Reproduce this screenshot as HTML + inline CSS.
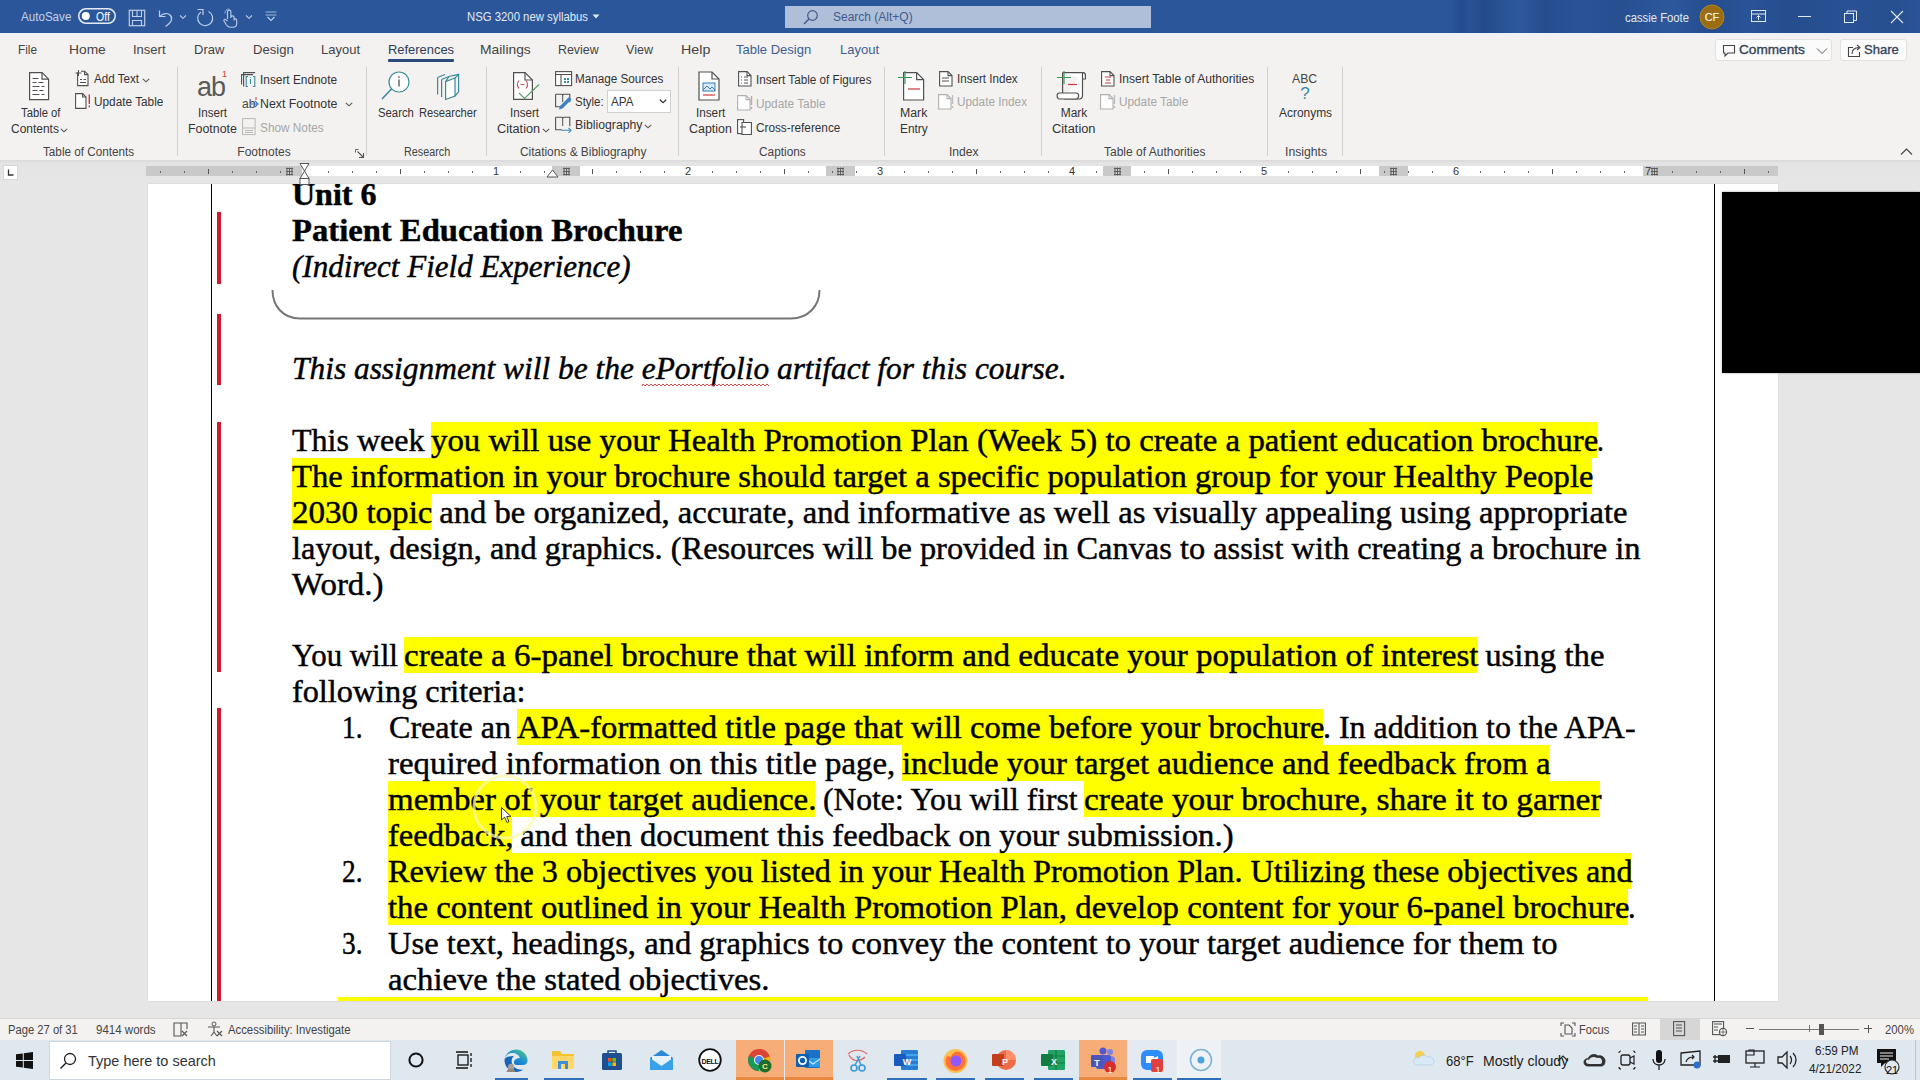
<!DOCTYPE html>
<html><head><meta charset="utf-8">
<style>
*{margin:0;padding:0;box-sizing:border-box}
html,body{width:1920px;height:1080px;overflow:hidden;background:#e6e6e6;font-family:"Liberation Sans",sans-serif;}
.a{position:absolute;white-space:pre}
svg{position:absolute;overflow:visible}
#title{position:absolute;left:0;top:0;width:1920px;height:33px;background:#2b579a;overflow:hidden}
#tabs{position:absolute;left:0;top:33px;width:1920px;height:32px;background:linear-gradient(#eef1f5 0px,#f4f1f0 4px,#f3f2f1 32px)}
#ribbon{position:absolute;left:0;top:65px;width:1920px;height:95px;background:#f3f2f1}
.tt{position:absolute;font-size:13px;color:#444;white-space:pre;line-height:16px}
.rt{position:absolute;font-size:12px;color:#262626;white-space:pre;line-height:14px}
.dis{color:#a6a6a6}
.gl{position:absolute;font-size:12px;color:#444;white-space:pre;line-height:14px}
.sep{position:absolute;top:4px;width:1px;height:87px;background:#d2d0ce}
#ruler{position:absolute;left:0;top:160px;width:1920px;height:24px;background:linear-gradient(#d9d9d9 0px,#e4e4e4 3px,#e6e6e6 24px)}
#page{position:absolute;left:148px;top:184px;width:1630px;height:817px;background:#fff;overflow:hidden;box-shadow:0 0 1px 0 #b8b8b8}
.hl{position:absolute;height:36px;background:#ffff00}
.tx{position:absolute;white-space:pre;-webkit-text-stroke:0.45px #000;font-family:"Liberation Serif",serif;font-size:32px;line-height:36px;color:#000;transform-origin:0 0}
#status{position:absolute;left:0;top:1018px;width:1920px;height:22px;background:#f3f2f1;border-top:1px solid #d6d6d6}
.st{position:absolute;font-size:12px;color:#444;white-space:pre;line-height:14px}
#taskbar{position:absolute;left:0;top:1040px;width:1920px;height:40px;background:#dfe7ef}
</style></head><body>
<div id="title">
<div style="position:absolute;left:1450px;top:0;width:470px;height:33px;background:linear-gradient(90deg,rgba(25,55,115,0) 0px,rgba(25,55,115,0.35) 12px,rgba(25,55,115,0.1) 20px,rgba(25,55,115,0.4) 34px,rgba(25,55,115,0.15) 50px,rgba(60,100,170,0.15) 70px,rgba(25,55,115,0.3) 95px,rgba(25,55,115,0.1) 130px,rgba(25,55,115,0.25) 170px,rgba(60,100,170,0.1) 220px,rgba(25,55,115,0.3) 260px,rgba(25,55,115,0.1) 300px,rgba(25,55,115,0.3) 340px,rgba(25,55,115,0.15) 400px,rgba(25,55,115,0.25) 440px,rgba(25,55,115,0.1) 470px)"></div>
</div>
<div class="a" style="left:21.0px;top:8.50px;font-size:13px;line-height:16px;color:#c3d0e8;font-family:'Liberation Sans',sans-serif;;transform:scaleX(0.8929);transform-origin:0 0">AutoSave</div>
<svg style="left:78px;top:8px;" width="38" height="16" viewBox="0 0 38 16"><rect x="0.75" y="0.75" width="36.5" height="14.5" rx="7.25" fill="none" stroke="#e6ecf5" stroke-width="1.5"/><circle cx="7.8" cy="8" r="4" fill="#fff"/></svg>
<div class="a" style="left:96.0px;top:9.84px;font-size:12px;line-height:14px;color:#fff;font-family:'Liberation Sans',sans-serif;;transform:scaleX(0.8750);transform-origin:0 0">Off</div>
<svg style="left:128px;top:9px;" width="18" height="18" viewBox="0 0 18 18"><rect x="1.3" y="1.3" width="15.4" height="15.4" fill="none" stroke="#bfcee8" stroke-width="1.2"/><path d="M4.5 1.3v6.2h9V1.3M4.5 16.7v-5.2h9v5.2M9 1.3v6" fill="none" stroke="#bfcee8" stroke-width="1.1"/></svg>
<svg style="left:157px;top:8px;" width="20" height="20" viewBox="0 0 20 20"><path d="M2.5 2.5v6h6" fill="none" stroke="#bfcee8" stroke-width="1.2"/><path d="M3 8.5C5.5 5 11 4.5 13.5 7.5 16 10.5 14.5 15 8.5 18.5" fill="none" stroke="#bfcee8" stroke-width="1.2"/></svg>
<svg style="left:179px;top:14px;" width="8" height="6" viewBox="0 0 8 6"><path d="M1 1.5l3 2.8 3-2.8" fill="none" stroke="#bfcee8" stroke-width="1.1"/></svg>
<svg style="left:195px;top:8px;" width="20" height="20" viewBox="0 0 20 20"><path d="M13.5 3.5A7.5 7.5 0 1 1 6 4" fill="none" stroke="#bfcee8" stroke-width="1.2"/><path d="M2.5 1.5h5.5v5.5" fill="none" stroke="#bfcee8" stroke-width="1.2"/></svg>
<svg style="left:222px;top:8px;" width="16" height="20" viewBox="0 0 16 20"><path d="M5.5 11V3.8a1.7 1.7 0 0 1 3.4 0V10M8.9 9.5a1.6 1.6 0 0 1 3.2 0v3M12.1 11.5a1.4 1.4 0 0 1 2.6 0.6v3.4c0 2.2-1.8 3.8-4 3.8H8.5c-1.8 0-3-0.8-4-2.3L2 13c-0.6-1 0.4-2.2 1.5-1.6L5.5 13" fill="none" stroke="#bfcee8" stroke-width="1.1"/><path d="M3 5.5c0-3 1.6-4.5 4.2-4.5" fill="none" stroke="#bfcee8" stroke-width="1" opacity="0.7"/></svg>
<svg style="left:245px;top:14px;" width="8" height="6" viewBox="0 0 8 6"><path d="M1 1.5l3 2.8 3-2.8" fill="none" stroke="#bfcee8" stroke-width="1.1"/></svg>
<svg style="left:264px;top:9px;" width="14" height="14" viewBox="0 0 14 14"><path d="M1.5 3h11M1.5 6h11" stroke="#bfcee8" stroke-width="1" opacity="0.8"/><path d="M3.5 8l3.5 3.5 3.5-3.5" fill="none" stroke="#bfcee8" stroke-width="1.2"/></svg>
<div class="a" style="left:467.0px;top:9.84px;font-size:12px;line-height:14px;color:#e2e9f4;font-family:'Liberation Sans',sans-serif;;transform:scaleX(0.9449);transform-origin:0 0">NSG 3200 new syllabus</div>
<svg style="left:592px;top:14px;" width="8" height="6" viewBox="0 0 8 6"><path d="M0.5 0.5h7l-3.5 4z" fill="#e2e9f4"/></svg>
<div style="position:absolute;left:785px;top:6px;width:366px;height:22px;background:#afbfda;"></div>
<svg style="left:802px;top:9px;" width="18" height="16" viewBox="0 0 18 16"><circle cx="10.5" cy="6.5" r="4.8" fill="none" stroke="#40598a" stroke-width="1.2"/><path d="M7 10 L2 15" stroke="#40598a" stroke-width="1.4"/></svg>
<div class="a" style="left:833.0px;top:9.84px;font-size:12px;line-height:14px;color:#3f5a8c;font-family:'Liberation Sans',sans-serif;;transform:scaleX(1.0000);transform-origin:0 0">Search (Alt+Q)</div>
<div class="a" style="left:1625.0px;top:10.84px;font-size:12px;line-height:14px;color:#e2e9f4;font-family:'Liberation Sans',sans-serif;;transform:scaleX(0.9412);transform-origin:0 0">cassie Foote</div>
<svg style="left:1699px;top:5px;" width="26" height="26" viewBox="0 0 26 26"><circle cx="13" cy="12" r="12" fill="#9b6d12"/><circle cx="13" cy="12" r="12" fill="none" stroke="#b58420" stroke-width="1"/></svg>
<div class="a" style="left:1212.0px;width:1000px;text-align:center;top:11.19px;font-size:11px;line-height:13px;color:#fff;font-family:'Liberation Sans',sans-serif;">CF</div>
<svg style="left:1751px;top:10px;" width="16" height="14" viewBox="0 0 16 14"><rect x="0.5" y="0.5" width="14" height="11" fill="none" stroke="#e2e9f4" stroke-width="1"/><path d="M0.5 4h14M7.5 10V5.5M5.5 7.5l2-2 2 2" fill="none" stroke="#e2e9f4" stroke-width="1"/></svg>
<div style="position:absolute;left:1798px;top:16px;width:13px;height:1px;background:#e2e9f4;"></div>
<svg style="left:1844px;top:10px;" width="14" height="14" viewBox="0 0 14 14"><rect x="0.5" y="3.5" width="9" height="9" fill="none" stroke="#e2e9f4"/><path d="M3 3.5V1h9.5v9.5H10" fill="none" stroke="#e2e9f4"/></svg>
<svg style="left:1890px;top:10px;" width="14" height="14" viewBox="0 0 14 14"><path d="M1 1L13 13M13 1L1 13" stroke="#e2e9f4" stroke-width="1.1"/></svg>
<div id="tabs"></div>
<div class="a" style="left:17.5px;top:42.30px;font-size:13px;line-height:16px;color:#444;font-family:'Liberation Sans',sans-serif;;transform:scaleX(0.9050);transform-origin:0 0">File</div>
<div class="a" style="left:69.0px;top:42.30px;font-size:13px;line-height:16px;color:#444;font-family:'Liberation Sans',sans-serif;;transform:scaleX(1.0606);transform-origin:0 0">Home</div>
<div class="a" style="left:133.0px;top:42.30px;font-size:13px;line-height:16px;color:#444;font-family:'Liberation Sans',sans-serif;;transform:scaleX(1.0000);transform-origin:0 0">Insert</div>
<div class="a" style="left:194.0px;top:42.30px;font-size:13px;line-height:16px;color:#444;font-family:'Liberation Sans',sans-serif;;transform:scaleX(1.0000);transform-origin:0 0">Draw</div>
<div class="a" style="left:252.5px;top:42.30px;font-size:13px;line-height:16px;color:#444;font-family:'Liberation Sans',sans-serif;;transform:scaleX(1.0051);transform-origin:0 0">Design</div>
<div class="a" style="left:321.0px;top:42.30px;font-size:13px;line-height:16px;color:#444;font-family:'Liberation Sans',sans-serif;;transform:scaleX(1.0000);transform-origin:0 0">Layout</div>
<div class="a" style="left:388.4px;top:42.30px;font-size:13px;line-height:16px;color:#2d3e57;font-family:'Liberation Sans',sans-serif;;transform:scaleX(0.9938);transform-origin:0 0">References</div>
<div class="a" style="left:480.0px;top:42.30px;font-size:13px;line-height:16px;color:#444;font-family:'Liberation Sans',sans-serif;;transform:scaleX(1.0652);transform-origin:0 0">Mailings</div>
<div class="a" style="left:558.0px;top:42.30px;font-size:13px;line-height:16px;color:#444;font-family:'Liberation Sans',sans-serif;;transform:scaleX(0.9524);transform-origin:0 0">Review</div>
<div class="a" style="left:626.0px;top:42.30px;font-size:13px;line-height:16px;color:#444;font-family:'Liberation Sans',sans-serif;;transform:scaleX(0.9643);transform-origin:0 0">View</div>
<div class="a" style="left:680.6px;top:42.30px;font-size:13px;line-height:16px;color:#444;font-family:'Liberation Sans',sans-serif;;transform:scaleX(1.0960);transform-origin:0 0">Help</div>
<div class="a" style="left:736.0px;top:42.30px;font-size:13px;line-height:16px;color:#3d5f92;font-family:'Liberation Sans',sans-serif;;transform:scaleX(1.0000);transform-origin:0 0">Table Design</div>
<div class="a" style="left:840.0px;top:42.30px;font-size:13px;line-height:16px;color:#3d5f92;font-family:'Liberation Sans',sans-serif;;transform:scaleX(1.0000);transform-origin:0 0">Layout</div>
<div style="position:absolute;left:388px;top:59px;width:66px;height:3px;background:#2b4a7a;border-radius:1px"></div>
<div style="position:absolute;left:1715px;top:39px;width:117px;height:22px;background:#fbfbfb;border:1px solid #e3e1df;border-radius:3px"></div>
<svg style="left:1722px;top:44px;" width="15" height="14" viewBox="0 0 15 14"><path d="M1.5 1.5h11v7.5h-6.5l-3 3v-3h-1.5z" fill="none" stroke="#444" stroke-width="1.1"/></svg>
<div class="a" style="left:1739.0px;top:41.50px;font-size:13px;line-height:16px;color:#34455a;font-family:'Liberation Sans',sans-serif;-webkit-text-stroke:0.35px #34455a;transform:scaleX(1.0476);transform-origin:0 0">Comments</div>
<svg style="left:1816px;top:47px;" width="12" height="8" viewBox="0 0 12 8"><path d="M1 1.5l5 5 5-5" fill="none" stroke="#555" stroke-width="1"/></svg>
<div style="position:absolute;left:1840px;top:39px;width:67px;height:22px;background:#fbfbfb;border:1px solid #e3e1df;border-radius:3px"></div>
<svg style="left:1847px;top:43px;" width="15" height="15" viewBox="0 0 15 15"><path d="M6 4.5H1.5v9h11V9" fill="none" stroke="#444" stroke-width="1.1"/><path d="M5 11c0-4 2.5-6.5 7-6.5M10 2l3 2.5-3 2.5" fill="none" stroke="#444" stroke-width="1.1"/></svg>
<div class="a" style="left:1864.0px;top:41.50px;font-size:13px;line-height:16px;color:#34455a;font-family:'Liberation Sans',sans-serif;-webkit-text-stroke:0.35px #34455a;transform:scaleX(1.0000);transform-origin:0 0">Share</div>
<div id="ribbon"></div>
<div style="position:absolute;left:177px;top:67px;width:1px;height:89px;background:#d2d0ce;"></div>
<div style="position:absolute;left:366px;top:67px;width:1px;height:89px;background:#d2d0ce;"></div>
<div style="position:absolute;left:486px;top:67px;width:1px;height:89px;background:#d2d0ce;"></div>
<div style="position:absolute;left:678px;top:67px;width:1px;height:89px;background:#d2d0ce;"></div>
<div style="position:absolute;left:884px;top:67px;width:1px;height:89px;background:#d2d0ce;"></div>
<div style="position:absolute;left:1041px;top:67px;width:1px;height:89px;background:#d2d0ce;"></div>
<div style="position:absolute;left:1267px;top:67px;width:1px;height:89px;background:#d2d0ce;"></div>
<div style="position:absolute;left:1342px;top:67px;width:1px;height:89px;background:#d2d0ce;"></div>
<div class="a" style="left:43.0px;top:144.84px;font-size:12px;line-height:14px;color:#444;font-family:'Liberation Sans',sans-serif;;transform:scaleX(0.9763);transform-origin:0 0">Table of Contents</div>
<div class="a" style="left:237.3px;top:144.84px;font-size:12px;line-height:14px;color:#444;font-family:'Liberation Sans',sans-serif;;transform:scaleX(1.0000);transform-origin:0 0">Footnotes</div>
<div class="a" style="left:404.3px;top:144.84px;font-size:12px;line-height:14px;color:#444;font-family:'Liberation Sans',sans-serif;;transform:scaleX(0.9000);transform-origin:0 0">Research</div>
<div class="a" style="left:520.0px;top:144.84px;font-size:12px;line-height:14px;color:#444;font-family:'Liberation Sans',sans-serif;;transform:scaleX(0.9921);transform-origin:0 0">Citations &amp; Bibliography</div>
<div class="a" style="left:759.3px;top:144.84px;font-size:12px;line-height:14px;color:#444;font-family:'Liberation Sans',sans-serif;;transform:scaleX(0.9870);transform-origin:0 0">Captions</div>
<div class="a" style="left:949.0px;top:144.84px;font-size:12px;line-height:14px;color:#444;font-family:'Liberation Sans',sans-serif;;transform:scaleX(1.0107);transform-origin:0 0">Index</div>
<div class="a" style="left:1104.0px;top:144.84px;font-size:12px;line-height:14px;color:#444;font-family:'Liberation Sans',sans-serif;;transform:scaleX(1.0000);transform-origin:0 0">Table of Authorities</div>
<div class="a" style="left:1285.0px;top:144.84px;font-size:12px;line-height:14px;color:#444;font-family:'Liberation Sans',sans-serif;;transform:scaleX(1.0175);transform-origin:0 0">Insights</div>
<svg style="left:355px;top:149px;" width="10" height="10" viewBox="0 0 10 10"><path d="M0.5 0.5h3M0.5 0.5v3" fill="none" stroke="#666" stroke-width="1"/><path d="M2.5 2.5l5.5 5.5M8.5 4v4.5H4" fill="none" stroke="#555" stroke-width="1.1"/></svg>
<svg style="left:28px;top:71px;" width="23" height="30" viewBox="0 0 23 30"><path d="M1.6 1.6h12.4l6.6 6.6v20.4H1.6z" fill="#fff" stroke="#505050" stroke-width="1.2"/><path d="M14 1.6v6.6h6.6" fill="none" stroke="#505050" stroke-width="1.2"/><path d="M4.5 7.5h6M12.5 7.5h0" stroke="#505050" stroke-width="1.1"/><path d="M4.5 11.5h4M10.5 11.5h5" stroke="#505050" stroke-width="1.1"/><path d="M4.5 15.5h7M13.5 15.5h3" stroke="#505050" stroke-width="1.1"/><path d="M4.5 19.5h5M11.5 19.5h4" stroke="#505050" stroke-width="1.1"/><path d="M4.5 23.5h7M13.5 23.5h3" stroke="#505050" stroke-width="1.1"/></svg>
<div class="a" style="left:20.6px;top:105.84px;font-size:12px;line-height:14px;color:#333;font-family:'Liberation Sans',sans-serif;;transform:scaleX(0.9381);transform-origin:0 0">Table of</div>
<div class="a" style="left:10.6px;top:121.84px;font-size:12px;line-height:14px;color:#333;font-family:'Liberation Sans',sans-serif;;transform:scaleX(0.9979);transform-origin:0 0">Contents</div>
<svg style="left:60px;top:128px;" width="8" height="5" viewBox="0 0 8 5"><path d="M0.8 0.8l3.2 3 3.2-3" fill="none" stroke="#555" stroke-width="1.1"/></svg>
<svg style="left:75px;top:69px;" width="15" height="18" viewBox="0 0 15 18"><path d="M2.6 3.6v13h10.4V5.6l-3.4-3.4H6" fill="#fff" stroke="#505050" stroke-width="1.1"/><path d="M9.6 2.2v3.4H13" fill="none" stroke="#505050" stroke-width="1.1"/><path d="M0.5 4h6M3.5 1v6" stroke="#505050" stroke-width="1"/><path d="M5 10.5h2M8.5 10.5h2.5M5 13.5h6" stroke="#505050" stroke-width="1"/></svg>
<div class="a" style="left:94.4px;top:71.84px;font-size:12px;line-height:14px;color:#333;font-family:'Liberation Sans',sans-serif;;transform:scaleX(0.9702);transform-origin:0 0">Add Text</div>
<svg style="left:142px;top:78px;" width="8" height="5" viewBox="0 0 8 5"><path d="M0.8 0.8l3.2 3 3.2-3" fill="none" stroke="#555" stroke-width="1.1"/></svg>
<svg style="left:74px;top:93px;" width="17" height="17" viewBox="0 0 17 17"><path d="M1.6 0.6h7l3.4 3.4v11.4H1.6z" fill="#fff" stroke="#505050" stroke-width="1.1"/><path d="M8.6 0.6v3.4H12" fill="none" stroke="#505050" stroke-width="1.1"/><path d="M15.3 1.5v9.5M15.3 12.5v1.8" stroke="#c8283a" stroke-width="1.3"/></svg>
<div class="a" style="left:94.4px;top:94.84px;font-size:12px;line-height:14px;color:#333;font-family:'Liberation Sans',sans-serif;;transform:scaleX(0.9841);transform-origin:0 0">Update Table</div>
<div class="a" style="left:197.0px;top:70.64px;font-size:27px;line-height:32px;color:#5a5a5a;font-family:'Liberation Sans',sans-serif;letter-spacing:-1px">ab</div>
<div class="a" style="left:222.0px;top:69.38px;font-size:9px;line-height:11px;color:#d13438;font-family:'Liberation Sans',sans-serif;">1</div>
<div class="a" style="left:197.5px;top:105.84px;font-size:12px;line-height:14px;color:#333;font-family:'Liberation Sans',sans-serif;;transform:scaleX(0.9690);transform-origin:0 0">Insert</div>
<div class="a" style="left:187.5px;top:121.84px;font-size:12px;line-height:14px;color:#333;font-family:'Liberation Sans',sans-serif;;transform:scaleX(1.0326);transform-origin:0 0">Footnote</div>
<svg style="left:241px;top:71px;" width="17" height="17" viewBox="0 0 17 17"><path d="M0.6 13.5V3.6h11.5M2.6 15.4V1.6h11.5" fill="none" stroke="#505050" stroke-width="1.1"/><path d="M7 5.5H5.2v10H7M12 5.5h1.8v10H12M9.5 8v5M9.5 6.3v0.8" fill="none" stroke="#3b8a9a" stroke-width="1.1"/></svg>
<div class="a" style="left:260.0px;top:72.84px;font-size:12px;line-height:14px;color:#333;font-family:'Liberation Sans',sans-serif;;transform:scaleX(0.9870);transform-origin:0 0">Insert Endnote</div>
<div class="a" style="left:242.0px;top:96.84px;font-size:12px;line-height:14px;color:#444;font-family:'Liberation Sans',sans-serif;">ab</div>
<svg style="left:250px;top:96px;" width="10" height="14" viewBox="0 0 10 14"><path d="M1 8h6M5 5l3 3-3 3" fill="none" stroke="#2f7dc2" stroke-width="1.1"/><path d="M6 1v3" stroke="#d13438" stroke-width="1"/></svg>
<div class="a" style="left:260.0px;top:96.84px;font-size:12px;line-height:14px;color:#333;font-family:'Liberation Sans',sans-serif;;transform:scaleX(1.0270);transform-origin:0 0">Next Footnote</div>
<svg style="left:345px;top:102px;" width="8" height="5" viewBox="0 0 8 5"><path d="M0.8 0.8l3.2 3 3.2-3" fill="none" stroke="#555" stroke-width="1.1"/></svg>
<svg style="left:242px;top:118px;" width="14" height="18" viewBox="0 0 14 18"><rect x="0.6" y="0.6" width="12.5" height="16" fill="none" stroke="#b8b8b8" stroke-width="1"/><path d="M0.6 10h12.5M3 12.5h8M3 14.5h8" stroke="#b8b8b8" stroke-width="1"/></svg>
<div class="a" style="left:260.0px;top:120.84px;font-size:12px;line-height:14px;color:#a6a6a6;font-family:'Liberation Sans',sans-serif;;transform:scaleX(0.9841);transform-origin:0 0">Show Notes</div>
<svg style="left:380px;top:71px;" width="32" height="32" viewBox="0 0 32 32"><circle cx="19" cy="11" r="10" fill="#fff" stroke="#3b8a9a" stroke-width="1.2"/><path d="M19 8.5v7" stroke="#333" stroke-width="1.1"/><circle cx="19" cy="6" r="0.8" fill="#333"/><path d="M11.5 18 L2 28" stroke="#3b8a9a" stroke-width="1.6"/></svg>
<div class="a" style="left:378.3px;top:105.84px;font-size:12px;line-height:14px;color:#333;font-family:'Liberation Sans',sans-serif;;transform:scaleX(0.9444);transform-origin:0 0">Search</div>
<svg style="left:435px;top:71px;" width="26" height="30" viewBox="0 0 26 30"><path d="M2.6 6.5L10 3.5M2.6 6.5v17" fill="none" stroke="#3b8a9a" stroke-width="1.2"/><path d="M6.6 8.5L14 5.5M6.6 8.5v17.5" fill="none" stroke="#3b8a9a" stroke-width="1.2"/><path d="M10.6 10.6L20 7v18l-9.4 3.5z" fill="#fff" stroke="#3b8a9a" stroke-width="1.2"/><path d="M10.6 10.6L14 5.5l9.6-2.2v17.5L20 25" fill="none" stroke="#3b8a9a" stroke-width="1.2"/><path d="M20 7l3.6-3.7" stroke="#3b8a9a" stroke-width="1.1"/></svg>
<div class="a" style="left:419.3px;top:105.84px;font-size:12px;line-height:14px;color:#333;font-family:'Liberation Sans',sans-serif;;transform:scaleX(0.9295);transform-origin:0 0">Researcher</div>
<svg style="left:512px;top:71px;" width="30" height="32" viewBox="0 0 30 32"><path d="M1.6 1.6h11.4l7.4 7.4v19.4H1.6z" fill="#fff" stroke="#505050" stroke-width="1.2"/><path d="M13 1.6v7.4h7.4" fill="none" stroke="#505050" stroke-width="1.2"/><path d="M7 9.5c-1.8 2.3-1.8 5.7 0 8M14 9.5c1.8 2.3 1.8 5.7 0 8M8.6 13.5h3.8" fill="none" stroke="#c8505a" stroke-width="1.1"/><path d="M7 22l5.5 5.5L27 13.5" fill="none" stroke="#5aa06a" stroke-width="1.2"/></svg>
<div class="a" style="left:509.7px;top:105.84px;font-size:12px;line-height:14px;color:#333;font-family:'Liberation Sans',sans-serif;;transform:scaleX(0.9655);transform-origin:0 0">Insert</div>
<div class="a" style="left:497.0px;top:121.84px;font-size:12px;line-height:14px;color:#333;font-family:'Liberation Sans',sans-serif;;transform:scaleX(1.0590);transform-origin:0 0">Citation</div>
<svg style="left:542px;top:128px;" width="8" height="5" viewBox="0 0 8 5"><path d="M0.8 0.8l3.2 3 3.2-3" fill="none" stroke="#555" stroke-width="1.1"/></svg>
<svg style="left:555px;top:71px;" width="18" height="16" viewBox="0 0 18 16"><rect x="0.6" y="0.6" width="16" height="14" fill="#fff" stroke="#505050" stroke-width="1.1"/><path d="M0.6 3.5h16M6 3.5v11" stroke="#505050" stroke-width="1.1"/><path d="M9 7h2v2H9zM12 7h2v2h-2zM9 10h2v2H9zM12 10h2v2h-2z" fill="#3b8a9a"/></svg>
<div class="a" style="left:575.3px;top:71.84px;font-size:12px;line-height:14px;color:#333;font-family:'Liberation Sans',sans-serif;;transform:scaleX(0.9742);transform-origin:0 0">Manage Sources</div>
<svg style="left:555px;top:93px;" width="18" height="18" viewBox="0 0 18 18"><path d="M0.6 1.2h6.2l0.9 0.8 0.9-0.8h6.2v8M0.6 1.2v12.6h5" fill="none" stroke="#505050" stroke-width="1.1"/><path d="M7.7 2v7" stroke="#505050" stroke-width="1"/><path d="M4 16.5l1-3.5 9-9 2.5 2.5-9 9z" fill="#3b82c4"/></svg>
<div class="a" style="left:575.3px;top:94.84px;font-size:12px;line-height:14px;color:#333;font-family:'Liberation Sans',sans-serif;;transform:scaleX(0.9536);transform-origin:0 0">Style:</div>
<div style="position:absolute;left:607px;top:90px;width:64px;height:23px;background:#fff;border:1px solid #d2d0ce"></div>
<div class="a" style="left:611.0px;top:94.84px;font-size:12px;line-height:14px;color:#333;font-family:'Liberation Sans',sans-serif;;transform:scaleX(0.9696);transform-origin:0 0">APA</div>
<svg style="left:659px;top:99px;" width="8" height="5" viewBox="0 0 8 5"><path d="M0.8 0.8l3.2 3 3.2-3" fill="none" stroke="#333" stroke-width="1.2"/></svg>
<svg style="left:555px;top:116px;" width="18" height="18" viewBox="0 0 18 18"><path d="M0.6 1.2h6.2l0.9 0.8 0.9-0.8h6.2v9M0.6 1.2v12.6h6" fill="none" stroke="#505050" stroke-width="1.1"/><path d="M7.7 2v8" stroke="#505050" stroke-width="1"/><path d="M6 14.3h10M13.5 11.8l2.5 2.5-2.5 2.5" fill="none" stroke="#3b8ac4" stroke-width="1.1"/></svg>
<div class="a" style="left:575.3px;top:117.84px;font-size:12px;line-height:14px;color:#333;font-family:'Liberation Sans',sans-serif;;transform:scaleX(1.0215);transform-origin:0 0">Bibliography</div>
<svg style="left:644px;top:124px;" width="8" height="5" viewBox="0 0 8 5"><path d="M0.8 0.8l3.2 3 3.2-3" fill="none" stroke="#555" stroke-width="1.1"/></svg>
<svg style="left:698px;top:71px;" width="24" height="30" viewBox="0 0 24 30"><path d="M1 1h13l7 7v21H1z" fill="#fff" stroke="#505050" stroke-width="1.2"/><path d="M14 1v7h7" fill="none" stroke="#505050" stroke-width="1.2"/><rect x="5" y="12" width="12" height="8" fill="#dbe9f6" stroke="#2f7dc2" stroke-width="1"/><path d="M5 19l4-4 3 3 2-2 3 3" fill="none" stroke="#2f7dc2" stroke-width="1"/><path d="M5 24h12" stroke="#d13438" stroke-width="1.2"/></svg>
<div class="a" style="left:696.0px;top:105.84px;font-size:12px;line-height:14px;color:#333;font-family:'Liberation Sans',sans-serif;;transform:scaleX(0.9759);transform-origin:0 0">Insert</div>
<div class="a" style="left:689.3px;top:121.84px;font-size:12px;line-height:14px;color:#333;font-family:'Liberation Sans',sans-serif;;transform:scaleX(1.0350);transform-origin:0 0">Caption</div>
<svg style="left:738px;top:71px;" width="15" height="17" viewBox="0 0 15 17"><path d="M0.6 0.6h8.4l4 4v10.4h-12.4z" fill="#fff" stroke="#505050" stroke-width="1.1"/><path d="M9 0.6v4h4" fill="none" stroke="#505050" stroke-width="1.1"/><path d="M3 6h1M6 6h4M3 9h1M6 9h4M3 12h1M6 12h4" stroke="#505050" stroke-width="1"/></svg>
<div class="a" style="left:756.0px;top:72.84px;font-size:12px;line-height:14px;color:#333;font-family:'Liberation Sans',sans-serif;;transform:scaleX(0.9744);transform-origin:0 0">Insert Table of Figures</div>
<svg style="left:737px;top:95px;" width="15" height="17" viewBox="0 0 15 17"><path d="M0.6 0.6h8.4l4 4v10.4h-12.4z" fill="#fff" stroke="#b0b0b0" stroke-width="1.1"/><path d="M9 0.6v4h4" fill="none" stroke="#b0b0b0" stroke-width="1.1"/><path d="M14.5 1v9M14.5 12v2" stroke="#c8a0a0" stroke-width="1.4"/></svg>
<div class="a" style="left:756.0px;top:96.84px;font-size:12px;line-height:14px;color:#a6a6a6;font-family:'Liberation Sans',sans-serif;;transform:scaleX(0.9855);transform-origin:0 0">Update Table</div>
<svg style="left:737px;top:119px;" width="16" height="17" viewBox="0 0 16 17"><rect x="0.6" y="0.6" width="6" height="14" fill="#fff" stroke="#505050" stroke-width="1.1"/><path d="M5 3.5h9.4v12H5z" fill="#fff" stroke="#505050" stroke-width="1.1"/><path d="M3 8h6" stroke="#505050" stroke-width="1.1"/></svg>
<div class="a" style="left:756.0px;top:120.84px;font-size:12px;line-height:14px;color:#333;font-family:'Liberation Sans',sans-serif;;transform:scaleX(0.9800);transform-origin:0 0">Cross-reference</div>
<svg style="left:897px;top:70px;" width="30" height="32" viewBox="0 0 30 32"><path d="M6.6 2.6h13l7 7v20.4H6.6z" fill="#fff" stroke="#505050" stroke-width="1.2"/><path d="M19.6 2.6v7h7" fill="none" stroke="#505050" stroke-width="1.2"/><path d="M1 7.5h14M8 1v13" stroke="#3a9a5b" stroke-width="1.2"/><path d="M11 19h12" stroke="#d13438" stroke-width="1.2"/></svg>
<div class="a" style="left:900.0px;top:105.84px;font-size:12px;line-height:14px;color:#333;font-family:'Liberation Sans',sans-serif;;transform:scaleX(1.0269);transform-origin:0 0">Mark</div>
<div class="a" style="left:900.0px;top:121.84px;font-size:12px;line-height:14px;color:#333;font-family:'Liberation Sans',sans-serif;;transform:scaleX(0.9889);transform-origin:0 0">Entry</div>
<svg style="left:939px;top:71px;" width="15" height="17" viewBox="0 0 15 17"><path d="M0.6 0.6h8.4l4 4v10.4h-12.4z" fill="#fff" stroke="#505050" stroke-width="1.1"/><path d="M9 0.6v4h4" fill="none" stroke="#505050" stroke-width="1.1"/><path d="M3 7h7M3 10h7" stroke="#505050" stroke-width="1"/></svg>
<div class="a" style="left:957.3px;top:71.84px;font-size:12px;line-height:14px;color:#333;font-family:'Liberation Sans',sans-serif;;transform:scaleX(0.9677);transform-origin:0 0">Insert Index</div>
<svg style="left:938px;top:94px;" width="15" height="17" viewBox="0 0 15 17"><path d="M0.6 0.6h8.4l4 4v10.4h-12.4z" fill="#fff" stroke="#b0b0b0" stroke-width="1.1"/><path d="M9 0.6v4h4" fill="none" stroke="#b0b0b0" stroke-width="1.1"/><path d="M14.5 1v9M14.5 12v2" stroke="#bbb" stroke-width="1.3"/></svg>
<div class="a" style="left:957.3px;top:94.84px;font-size:12px;line-height:14px;color:#a6a6a6;font-family:'Liberation Sans',sans-serif;;transform:scaleX(0.9814);transform-origin:0 0">Update Index</div>
<svg style="left:1056px;top:70px;" width="32" height="32" viewBox="0 0 32 32"><path d="M6.6 2.6H27c1.5 0 2.4 1 2.4 2.4v4H26.5M26.5 2.6v22.5c0 2-1 3.9-3 3.9H8" fill="#fff" stroke="#505050" stroke-width="1.2"/><path d="M6.6 2.6v20.4H3.5c-1.5 0-2.4 1-2.4 2.6 0 2 1 3.4 2.5 3.4H20c1.6 0 2.6-1.6 2.6-3.2 0-1.5-0.8-2.8-2.6-2.8H6.6" fill="#fff" stroke="#505050" stroke-width="1.2"/><path d="M1 7.5h14M8 1v13" stroke="#3a9a5b" stroke-width="1.2"/><path d="M12 14.5h9" stroke="#d13438" stroke-width="1.2"/></svg>
<div class="a" style="left:1060.7px;top:105.84px;font-size:12px;line-height:14px;color:#333;font-family:'Liberation Sans',sans-serif;;transform:scaleX(1.0000);transform-origin:0 0">Mark</div>
<div class="a" style="left:1052.3px;top:121.84px;font-size:12px;line-height:14px;color:#333;font-family:'Liberation Sans',sans-serif;;transform:scaleX(1.0692);transform-origin:0 0">Citation</div>
<svg style="left:1101px;top:71px;" width="15" height="17" viewBox="0 0 15 17"><path d="M0.6 0.6h8.4l4 4v10.4h-12.4z" fill="#fff" stroke="#505050" stroke-width="1.1"/><path d="M9 0.6v4h4" fill="none" stroke="#505050" stroke-width="1.1"/><path d="M4 6h6M5 9h4M4 12h6" stroke="#d13438" stroke-width="1"/></svg>
<div class="a" style="left:1119.0px;top:71.84px;font-size:12px;line-height:14px;color:#333;font-family:'Liberation Sans',sans-serif;;transform:scaleX(1.0053);transform-origin:0 0">Insert Table of Authorities</div>
<svg style="left:1100px;top:94px;" width="15" height="17" viewBox="0 0 15 17"><path d="M0.6 0.6h8.4l4 4v10.4h-12.4z" fill="#fff" stroke="#b0b0b0" stroke-width="1.1"/><path d="M9 0.6v4h4" fill="none" stroke="#b0b0b0" stroke-width="1.1"/><path d="M14.5 1v9M14.5 12v2" stroke="#bbb" stroke-width="1.3"/></svg>
<div class="a" style="left:1119.0px;top:94.84px;font-size:12px;line-height:14px;color:#a6a6a6;font-family:'Liberation Sans',sans-serif;;transform:scaleX(0.9812);transform-origin:0 0">Update Table</div>
<div class="a" style="left:1292.3px;top:71.84px;font-size:12px;line-height:14px;color:#444;font-family:'Liberation Sans',sans-serif;;transform:scaleX(1.0167);transform-origin:0 0">ABC</div>
<div class="a" style="left:805.0px;width:1000px;text-align:center;top:84.11px;font-size:17px;line-height:20px;color:#3a8aa0;font-family:'Liberation Sans',sans-serif;">?</div>
<div class="a" style="left:1279.0px;top:105.84px;font-size:12px;line-height:14px;color:#333;font-family:'Liberation Sans',sans-serif;;transform:scaleX(0.9943);transform-origin:0 0">Acronyms</div>
<svg style="left:1900px;top:148px;" width="13" height="8" viewBox="0 0 13 8"><path d="M1 6.5l5.5-5.5 5.5 5.5" fill="none" stroke="#444" stroke-width="1.1"/></svg>
<div id="ruler"></div>
<div style="position:absolute;left:3px;top:165px;width:15px;height:15px;background:#fff;border:1px solid #d8d8d8"></div>
<svg style="left:7px;top:169px;" width="8" height="8" viewBox="0 0 8 8"><path d="M1.5 0.5v5.5h5" fill="none" stroke="#333" stroke-width="1.3"/></svg>
<div style="position:absolute;left:146px;top:166px;width:1632px;height:10px;background:#c9c9c9;"></div>
<div style="position:absolute;left:302px;top:166px;width:1341px;height:10px;background:#ffffff;"></div>
<div style="position:absolute;left:283px;top:166px;width:19px;height:10px;background:#c9c9c9;"></div>
<div style="position:absolute;left:552px;top:166px;width:28px;height:10px;background:#c9c9c9;"></div>
<div style="position:absolute;left:826px;top:166px;width:29px;height:10px;background:#c9c9c9;"></div>
<div style="position:absolute;left:1103px;top:166px;width:28px;height:10px;background:#c9c9c9;"></div>
<div style="position:absolute;left:1379px;top:166px;width:29px;height:10px;background:#c9c9c9;"></div>
<div style="position:absolute;left:1643px;top:166px;width:17px;height:10px;background:#c9c9c9;"></div>
<svg style="left:286.0px;top:167px;" width="7" height="9" viewBox="0 0 7 9"><path d="M0 1.5h7M0 4.5h7M0 7.5h7M1 0.5v8M3.5 0.5v8M6 0.5v8" stroke="#555" stroke-width="0.9"/></svg>
<svg style="left:562.5px;top:167px;" width="7" height="9" viewBox="0 0 7 9"><path d="M0 1.5h7M0 4.5h7M0 7.5h7M1 0.5v8M3.5 0.5v8M6 0.5v8" stroke="#555" stroke-width="0.9"/></svg>
<svg style="left:837.0px;top:167px;" width="7" height="9" viewBox="0 0 7 9"><path d="M0 1.5h7M0 4.5h7M0 7.5h7M1 0.5v8M3.5 0.5v8M6 0.5v8" stroke="#555" stroke-width="0.9"/></svg>
<svg style="left:1113.5px;top:167px;" width="7" height="9" viewBox="0 0 7 9"><path d="M0 1.5h7M0 4.5h7M0 7.5h7M1 0.5v8M3.5 0.5v8M6 0.5v8" stroke="#555" stroke-width="0.9"/></svg>
<svg style="left:1390.0px;top:167px;" width="7" height="9" viewBox="0 0 7 9"><path d="M0 1.5h7M0 4.5h7M0 7.5h7M1 0.5v8M3.5 0.5v8M6 0.5v8" stroke="#555" stroke-width="0.9"/></svg>
<svg style="left:1650.5px;top:167px;" width="7" height="9" viewBox="0 0 7 9"><path d="M0 1.5h7M0 4.5h7M0 7.5h7M1 0.5v8M3.5 0.5v8M6 0.5v8" stroke="#555" stroke-width="0.9"/></svg>
<div style="position:absolute;left:160px;top:171px;width:1px;height:1.5px;background:#666;"></div>
<div style="position:absolute;left:184px;top:171px;width:1px;height:1.5px;background:#666;"></div>
<div style="position:absolute;left:208px;top:169px;width:1px;height:5px;background:#555;"></div>
<div style="position:absolute;left:232px;top:171px;width:1px;height:1.5px;background:#666;"></div>
<div style="position:absolute;left:256px;top:171px;width:1px;height:1.5px;background:#666;"></div>
<div style="position:absolute;left:280px;top:171px;width:1px;height:1.5px;background:#666;"></div>
<div style="position:absolute;left:328px;top:171px;width:1px;height:1.5px;background:#666;"></div>
<div style="position:absolute;left:352px;top:171px;width:1px;height:1.5px;background:#666;"></div>
<div style="position:absolute;left:376px;top:171px;width:1px;height:1.5px;background:#666;"></div>
<div style="position:absolute;left:400px;top:169px;width:1px;height:5px;background:#555;"></div>
<div style="position:absolute;left:424px;top:171px;width:1px;height:1.5px;background:#666;"></div>
<div style="position:absolute;left:448px;top:171px;width:1px;height:1.5px;background:#666;"></div>
<div style="position:absolute;left:472px;top:171px;width:1px;height:1.5px;background:#666;"></div>
<div class="a" style="left:-4.0px;width:1000px;text-align:center;top:164.69px;font-size:11px;line-height:13px;color:#333;font-family:'Liberation Sans',sans-serif;">1</div>
<div style="position:absolute;left:520px;top:171px;width:1px;height:1.5px;background:#666;"></div>
<div style="position:absolute;left:544px;top:171px;width:1px;height:1.5px;background:#666;"></div>
<div style="position:absolute;left:568px;top:171px;width:1px;height:1.5px;background:#666;"></div>
<div style="position:absolute;left:592px;top:169px;width:1px;height:5px;background:#555;"></div>
<div style="position:absolute;left:616px;top:171px;width:1px;height:1.5px;background:#666;"></div>
<div style="position:absolute;left:640px;top:171px;width:1px;height:1.5px;background:#666;"></div>
<div style="position:absolute;left:664px;top:171px;width:1px;height:1.5px;background:#666;"></div>
<div class="a" style="left:188.0px;width:1000px;text-align:center;top:164.69px;font-size:11px;line-height:13px;color:#333;font-family:'Liberation Sans',sans-serif;">2</div>
<div style="position:absolute;left:712px;top:171px;width:1px;height:1.5px;background:#666;"></div>
<div style="position:absolute;left:736px;top:171px;width:1px;height:1.5px;background:#666;"></div>
<div style="position:absolute;left:760px;top:171px;width:1px;height:1.5px;background:#666;"></div>
<div style="position:absolute;left:784px;top:169px;width:1px;height:5px;background:#555;"></div>
<div style="position:absolute;left:808px;top:171px;width:1px;height:1.5px;background:#666;"></div>
<div style="position:absolute;left:832px;top:171px;width:1px;height:1.5px;background:#666;"></div>
<div style="position:absolute;left:856px;top:171px;width:1px;height:1.5px;background:#666;"></div>
<div class="a" style="left:380.0px;width:1000px;text-align:center;top:164.69px;font-size:11px;line-height:13px;color:#333;font-family:'Liberation Sans',sans-serif;">3</div>
<div style="position:absolute;left:904px;top:171px;width:1px;height:1.5px;background:#666;"></div>
<div style="position:absolute;left:928px;top:171px;width:1px;height:1.5px;background:#666;"></div>
<div style="position:absolute;left:952px;top:171px;width:1px;height:1.5px;background:#666;"></div>
<div style="position:absolute;left:976px;top:169px;width:1px;height:5px;background:#555;"></div>
<div style="position:absolute;left:1000px;top:171px;width:1px;height:1.5px;background:#666;"></div>
<div style="position:absolute;left:1024px;top:171px;width:1px;height:1.5px;background:#666;"></div>
<div style="position:absolute;left:1048px;top:171px;width:1px;height:1.5px;background:#666;"></div>
<div class="a" style="left:572.0px;width:1000px;text-align:center;top:164.69px;font-size:11px;line-height:13px;color:#333;font-family:'Liberation Sans',sans-serif;">4</div>
<div style="position:absolute;left:1096px;top:171px;width:1px;height:1.5px;background:#666;"></div>
<div style="position:absolute;left:1120px;top:171px;width:1px;height:1.5px;background:#666;"></div>
<div style="position:absolute;left:1144px;top:171px;width:1px;height:1.5px;background:#666;"></div>
<div style="position:absolute;left:1168px;top:169px;width:1px;height:5px;background:#555;"></div>
<div style="position:absolute;left:1192px;top:171px;width:1px;height:1.5px;background:#666;"></div>
<div style="position:absolute;left:1216px;top:171px;width:1px;height:1.5px;background:#666;"></div>
<div style="position:absolute;left:1240px;top:171px;width:1px;height:1.5px;background:#666;"></div>
<div class="a" style="left:764.0px;width:1000px;text-align:center;top:164.69px;font-size:11px;line-height:13px;color:#333;font-family:'Liberation Sans',sans-serif;">5</div>
<div style="position:absolute;left:1288px;top:171px;width:1px;height:1.5px;background:#666;"></div>
<div style="position:absolute;left:1312px;top:171px;width:1px;height:1.5px;background:#666;"></div>
<div style="position:absolute;left:1336px;top:171px;width:1px;height:1.5px;background:#666;"></div>
<div style="position:absolute;left:1360px;top:169px;width:1px;height:5px;background:#555;"></div>
<div style="position:absolute;left:1384px;top:171px;width:1px;height:1.5px;background:#666;"></div>
<div style="position:absolute;left:1408px;top:171px;width:1px;height:1.5px;background:#666;"></div>
<div style="position:absolute;left:1432px;top:171px;width:1px;height:1.5px;background:#666;"></div>
<div class="a" style="left:956.0px;width:1000px;text-align:center;top:164.69px;font-size:11px;line-height:13px;color:#333;font-family:'Liberation Sans',sans-serif;">6</div>
<div style="position:absolute;left:1480px;top:171px;width:1px;height:1.5px;background:#666;"></div>
<div style="position:absolute;left:1504px;top:171px;width:1px;height:1.5px;background:#666;"></div>
<div style="position:absolute;left:1528px;top:171px;width:1px;height:1.5px;background:#666;"></div>
<div style="position:absolute;left:1552px;top:169px;width:1px;height:5px;background:#555;"></div>
<div style="position:absolute;left:1576px;top:171px;width:1px;height:1.5px;background:#666;"></div>
<div style="position:absolute;left:1600px;top:171px;width:1px;height:1.5px;background:#666;"></div>
<div style="position:absolute;left:1624px;top:171px;width:1px;height:1.5px;background:#666;"></div>
<div class="a" style="left:1148.0px;width:1000px;text-align:center;top:164.69px;font-size:11px;line-height:13px;color:#333;font-family:'Liberation Sans',sans-serif;">7</div>
<div style="position:absolute;left:1672px;top:171px;width:1px;height:1.5px;background:#666;"></div>
<div style="position:absolute;left:1696px;top:171px;width:1px;height:1.5px;background:#666;"></div>
<div style="position:absolute;left:1720px;top:171px;width:1px;height:1.5px;background:#666;"></div>
<div style="position:absolute;left:1744px;top:169px;width:1px;height:5px;background:#555;"></div>
<div style="position:absolute;left:1768px;top:171px;width:1px;height:1.5px;background:#666;"></div>
<svg style="left:299px;top:162px;z-index:5" width="11" height="23" viewBox="0 0 11 23"><path d="M1 1.5h9L5.5 9z" fill="#fff" stroke="#555" stroke-width="1"/><path d="M1 16.5L5.5 9 10 16.5z" fill="#fff" stroke="#555" stroke-width="1"/><rect x="1" y="16.5" width="9" height="6" fill="#fff" stroke="#555" stroke-width="1"/></svg>
<svg style="left:546px;top:168px;" width="13" height="10" viewBox="0 0 13 10"><path d="M1 9L6.5 2 12 9z" fill="#fff" stroke="#555" stroke-width="1"/></svg>
<div id="page">
<div style="position:absolute;left:63px;top:0px;width:1px;height:817px;background:#000;"></div>
<div style="position:absolute;left:1566px;top:0px;width:1px;height:817px;background:#000;"></div>
<div style="position:absolute;left:69px;top:28px;width:4px;height:71.5px;background:#cf1a2e;"></div>
<div style="position:absolute;left:69px;top:130px;width:4px;height:71.4px;background:#cf1a2e;"></div>
<div style="position:absolute;left:69px;top:238px;width:4px;height:250.3px;background:#cf1a2e;"></div>
<div style="position:absolute;left:69px;top:524.4px;width:4px;height:293.6px;background:#cf1a2e;"></div>
<svg style="left:123px;top:105px;" width="552" height="32" viewBox="0 0 552 32"><path d="M1.5 1 C1.5 17 12 29.5 29 29.5 H520 C537 29.5 548.5 17 548.5 1" fill="none" stroke="#767676" stroke-width="2"/></svg>
<div class="hl" style="left:283.0px;top:238.0px;width:1165.7px"></div>
<div class="hl" style="left:144.0px;top:274.0px;width:1300.0px"></div>
<div class="hl" style="left:144.0px;top:310.0px;width:139.0px"></div>
<div class="hl" style="left:256.0px;top:453.0px;width:1073.0px"></div>
<div class="hl" style="left:369.0px;top:525.0px;width:806.0px"></div>
<div class="hl" style="left:754.0px;top:561.0px;width:647.0px"></div>
<div class="hl" style="left:240.0px;top:597.0px;width:427.0px"></div>
<div class="hl" style="left:936.0px;top:597.0px;width:516.0px"></div>
<div class="hl" style="left:240.0px;top:633.0px;width:124.0px"></div>
<div class="hl" style="left:240.0px;top:669.0px;width:1243.0px"></div>
<div class="hl" style="left:240.0px;top:705.0px;width:1240.0px"></div>
<div class="hl" style="left:190.0px;top:813.0px;width:1310.0px"></div>
<div class="tx" style="left:144.0px;top:-8.4px;transform:scaleX(1.0006);font-weight:bold;">Unit 6</div>
<div class="tx" style="left:144.0px;top:27.8px;transform:scaleX(1.0200);font-weight:bold;">Patient Education Brochure</div>
<div class="tx" style="left:144.0px;top:63.9px;transform:scaleX(0.9703);font-style:italic;">(Indirect Field Experience)</div>
<div class="tx" style="left:144.0px;top:166.2px;transform:scaleX(0.9812);font-style:italic;">This assignment will be the ePortfolio artifact for this course.</div>
<div class="tx" style="left:144.0px;top:237.7px;transform:scaleX(1.0007);">This week </div>
<div class="tx" style="left:283.0px;top:237.7px;transform:scaleX(1.0253);">you will use your Health Promotion Plan (Week 5) to create a patient education brochure</div>
<div class="tx" style="left:1448.7px;top:237.7px;transform:scaleX(0.8500);">.</div>
<div class="tx" style="left:144.0px;top:273.7px;transform:scaleX(1.0189);">The information in your brochure should target a specific population group for your Healthy People</div>
<div class="tx" style="left:144.0px;top:309.7px;transform:scaleX(1.0332);">2030 topic</div>
<div class="tx" style="left:283.0px;top:309.7px;transform:scaleX(1.0199);"> and be organized, accurate, and informative as well as visually appealing using appropriate</div>
<div class="tx" style="left:144.0px;top:345.7px;transform:scaleX(1.0123);">layout, design, and graphics. (Resources will be provided in Canvas to assist with creating a brochure in</div>
<div class="tx" style="left:144.0px;top:381.7px;transform:scaleX(1.0286);">Word.)</div>
<div class="tx" style="left:144.0px;top:452.7px;transform:scaleX(0.9644);">You will </div>
<div class="tx" style="left:256.0px;top:452.7px;transform:scaleX(1.0318);">create a 6-panel brochure that will inform and educate your population of interest</div>
<div class="tx" style="left:1329.0px;top:452.7px;transform:scaleX(1.0246);"> using the</div>
<div class="tx" style="left:144.0px;top:488.7px;transform:scaleX(1.0068);">following criteria:</div>
<div class="tx" style="left:194.0px;top:524.7px;transform:scaleX(0.8542);">1.</div>
<div class="tx" style="left:240.5px;top:524.7px;transform:scaleX(1.0023);">Create an </div>
<div class="tx" style="left:369.0px;top:524.7px;transform:scaleX(1.0203);">APA-formatted title page that will come before your brochure</div>
<div class="tx" style="left:1175.0px;top:524.7px;transform:scaleX(0.9969);">. In addition to the APA-</div>
<div class="tx" style="left:240.0px;top:560.7px;transform:scaleX(1.0267);">required information on this title page, </div>
<div class="tx" style="left:754.0px;top:560.7px;transform:scaleX(1.0247);">include your target audience and feedback from a</div>
<div class="tx" style="left:240.0px;top:596.7px;transform:scaleX(1.0297);">member of your target audience.</div>
<div class="tx" style="left:667.0px;top:596.7px;transform:scaleX(0.9880);"> (Note: You will first </div>
<div class="tx" style="left:936.0px;top:596.7px;transform:scaleX(1.0420);">create your brochure, share it to garner</div>
<div class="tx" style="left:240.0px;top:632.7px;transform:scaleX(1.0165);">feedback,</div>
<div class="tx" style="left:364.0px;top:632.7px;transform:scaleX(1.0212);"> and then document this feedback on your submission.)</div>
<div class="tx" style="left:194.0px;top:668.7px;transform:scaleX(0.8542);">2.</div>
<div class="tx" style="left:240.0px;top:668.7px;transform:scaleX(1.0067);">Review the 3 objectives you listed in your Health Promotion Plan. Utilizing these objectives and</div>
<div class="tx" style="left:240.0px;top:704.7px;transform:scaleX(1.0242);">the content outlined in your Health Promotion Plan, develop content for your 6-panel brochure</div>
<div class="tx" style="left:1480.0px;top:704.7px;transform:scaleX(0.9375);">.</div>
<div class="tx" style="left:194.0px;top:740.7px;transform:scaleX(0.8542);">3.</div>
<div class="tx" style="left:240.0px;top:740.7px;transform:scaleX(1.0184);">Use text, headings, and graphics to convey the content to your target audience for them to</div>
<div class="tx" style="left:240.0px;top:776.7px;transform:scaleX(1.0223);">achieve the stated objectives.</div>
<svg style="left:494px;top:199px;" width="128" height="5" viewBox="0 0 128 5"><path d="M0 3 L1 1 L3 3 L5 1 L7 3 L9 1 L11 3 L13 1 L15 3 L17 1 L19 3 L21 1 L23 3 L25 1 L27 3 L29 1 L31 3 L33 1 L35 3 L37 1 L39 3 L41 1 L43 3 L45 1 L47 3 L49 1 L51 3 L53 1 L55 3 L57 1 L59 3 L61 1 L63 3 L65 1 L67 3 L69 1 L71 3 L73 1 L75 3 L77 1 L79 3 L81 1 L83 3 L85 1 L87 3 L89 1 L91 3 L93 1 L95 3 L97 1 L99 3 L101 1 L103 3 L105 1 L107 3 L109 1 L111 3 L113 1 L115 3 L117 1 L119 3 L121 1 L123 3 L125 1 L127 3" fill="none" stroke="#e03030" stroke-width="0.9"/></svg>
<svg style="left:324px;top:590px;" width="66" height="66" viewBox="0 0 66 66"><circle cx="33" cy="33" r="31" fill="none" stroke="rgba(250,250,170,0.75)" stroke-width="3"/></svg>
<svg style="left:353px;top:623px;" width="12" height="18" viewBox="0 0 12 18"><path d="M0.5 0.5 L0.5 13 L3.6 10.2 L6 15.5 L8 14.6 L5.7 9.5 L9.8 9.3 Z" fill="#fff" stroke="#222" stroke-width="0.9"/></svg>
</div>
<div style="position:absolute;left:1722px;top:192px;width:198px;height:181px;background:#000;box-shadow:0 0 2px rgba(0,0,0,0.4)"></div>
<div id="status"></div>
<div class="a" style="left:8.3px;top:1022.84px;font-size:12px;line-height:14px;color:#444;font-family:'Liberation Sans',sans-serif;;transform:scaleX(0.9342);transform-origin:0 0">Page 27 of 31</div>
<div class="a" style="left:96.0px;top:1022.84px;font-size:12px;line-height:14px;color:#444;font-family:'Liberation Sans',sans-serif;;transform:scaleX(0.9607);transform-origin:0 0">9414 words</div>
<svg style="left:173px;top:1022px;" width="16" height="15" viewBox="0 0 16 15"><path d="M1 1h7v13H1zM8 1h6v6" fill="none" stroke="#555" stroke-width="1.1"/><path d="M9 9l5 5M14 9l-5 5" stroke="#555" stroke-width="1.1"/></svg>
<svg style="left:207px;top:1021px;" width="16" height="16" viewBox="0 0 16 16"><circle cx="7" cy="3" r="2" fill="none" stroke="#555"/><path d="M1 6h12M7 6v5l-3 4M7 11l3 4" fill="none" stroke="#555" stroke-width="1.1"/><path d="M10 10l5 5M15 10l-5 5" stroke="#555" stroke-width="1.1"/></svg>
<div class="a" style="left:227.5px;top:1022.84px;font-size:12px;line-height:14px;color:#444;font-family:'Liberation Sans',sans-serif;;transform:scaleX(0.9423);transform-origin:0 0">Accessibility: Investigate</div>
<svg style="left:1560px;top:1022px;" width="16" height="15" viewBox="0 0 16 15"><path d="M1 4V1h3M12 1h3v3M15 11v3h-3M4 14H1v-3" fill="none" stroke="#555" stroke-width="1.1"/><path d="M5 3h4l3 3v6H5z" fill="none" stroke="#555" stroke-width="1.1"/></svg>
<div class="a" style="left:1578.6px;top:1022.84px;font-size:12px;line-height:14px;color:#444;font-family:'Liberation Sans',sans-serif;;transform:scaleX(0.9258);transform-origin:0 0">Focus</div>
<svg style="left:1632px;top:1022px;" width="15" height="14" viewBox="0 0 15 14"><path d="M0.6 1h6.4v12H0.6zM7 1h6.4v12H7z" fill="none" stroke="#555" stroke-width="1.1"/><path d="M2 4h3M2 7h3M2 10h3M9 4h3M9 7h3M9 10h3" stroke="#555"/></svg>
<div style="position:absolute;left:1660px;top:1019px;width:40px;height:21px;background:#d6d6d6;"></div>
<svg style="left:1673px;top:1021px;" width="13" height="16" viewBox="0 0 13 16"><rect x="0.6" y="0.6" width="11" height="14" fill="none" stroke="#555" stroke-width="1.1"/><path d="M3 4h6M3 7h6M3 10h6" stroke="#555"/></svg>
<svg style="left:1712px;top:1021px;" width="16" height="16" viewBox="0 0 16 16"><rect x="0.6" y="0.6" width="11" height="13" fill="none" stroke="#555" stroke-width="1.1"/><path d="M2 3h8M2 6h4M2 9h4" stroke="#555"/><circle cx="11" cy="11" r="3.6" fill="#fff" stroke="#555" stroke-width="1.1"/><path d="M7.4 11h7.2M11 7.4v7.2" stroke="#555" stroke-width="0.8"/></svg>
<div style="position:absolute;left:1746px;top:1028px;width:8px;height:1px;background:#555;"></div>
<div style="position:absolute;left:1759px;top:1028.5px;width:100px;height:1px;background:#777;"></div>
<div style="position:absolute;left:1809px;top:1025px;width:1px;height:7px;background:#777;"></div>
<div style="position:absolute;left:1819px;top:1024px;width:5px;height:11px;background:#555;"></div>
<div style="position:absolute;left:1864px;top:1028px;width:8px;height:1px;background:#555;"></div>
<div style="position:absolute;left:1867.5px;top:1024.5px;width:1px;height:8px;background:#555;"></div>
<div class="a" style="left:1884.6px;top:1022.84px;font-size:12px;line-height:14px;color:#444;font-family:'Liberation Sans',sans-serif;;transform:scaleX(0.9448);transform-origin:0 0">200%</div>
<div id="taskbar"></div>
<svg style="left:16px;top:1052px;" width="17" height="17" viewBox="0 0 17 17"><path d="M0 2.3L6.8 1.4V8H0zM7.8 1.3L17 0V8H7.8zM0 9h6.8v6.6L0 14.7zM7.8 9H17v8l-9.2-1.3z" fill="#111"/></svg>
<div style="position:absolute;left:49px;top:1041px;width:342px;height:39px;background:#fff;border:1px solid #cfd6dd"></div>
<svg style="left:59px;top:1052px;" width="18" height="18" viewBox="0 0 18 18"><circle cx="11" cy="7" r="5.5" fill="none" stroke="#222" stroke-width="1.3"/><path d="M7 11L1.5 16.5" stroke="#222" stroke-width="1.5"/></svg>
<div class="a" style="left:88.3px;top:1051.80px;font-size:15px;line-height:18px;color:#333;font-family:'Liberation Sans',sans-serif;;transform:scaleX(0.9644);transform-origin:0 0">Type here to search</div>
<svg style="left:408px;top:1052px;" width="16" height="16" viewBox="0 0 16 16"><circle cx="8" cy="8" r="6.6" fill="none" stroke="#111" stroke-width="2"/></svg>
<svg style="left:455px;top:1051px;" width="18" height="18" viewBox="0 0 18 18"><rect x="3" y="4" width="10" height="10" fill="none" stroke="#111" stroke-width="1.3"/><path d="M1 1h12M1 17h12M16 2v3M16 7v4M16 13v3" stroke="#111" stroke-width="1.3"/></svg>
<div style="position:absolute;left:736px;top:1040px;width:48px;height:40px;background:#f6ad78;"></div>
<div style="position:absolute;left:736px;top:1077px;width:48px;height:3px;background:#e8883f;"></div>
<div style="position:absolute;left:785px;top:1040px;width:48px;height:40px;background:#f6ad78;"></div>
<div style="position:absolute;left:785px;top:1077px;width:48px;height:3px;background:#e8883f;"></div>
<div style="position:absolute;left:1079px;top:1040px;width:48px;height:40px;background:#f6ad78;"></div>
<div style="position:absolute;left:1079px;top:1077px;width:48px;height:3px;background:#e8883f;"></div>
<div style="position:absolute;left:1127px;top:1040px;width:50px;height:40px;background:#e3eaf1;"></div>
<div style="position:absolute;left:1177px;top:1040px;width:44px;height:40px;background:#eef2f6;"></div>
<div style="position:absolute;left:495px;top:1078px;width:33px;height:2px;background:#2f6fba;"></div>
<div style="position:absolute;left:544px;top:1078px;width:40px;height:2px;background:#2f6fba;"></div>
<div style="position:absolute;left:887px;top:1078px;width:40px;height:2px;background:#2f6fba;"></div>
<div style="position:absolute;left:936px;top:1078px;width:39px;height:2px;background:#2f6fba;"></div>
<div style="position:absolute;left:985px;top:1078px;width:39px;height:2px;background:#2f6fba;"></div>
<div style="position:absolute;left:1034px;top:1078px;width:39px;height:2px;background:#2f6fba;"></div>
<div style="position:absolute;left:1133px;top:1078px;width:39px;height:2px;background:#2f6fba;"></div>
<div style="position:absolute;left:1177px;top:1078px;width:44px;height:2px;background:#2f6fba;"></div>
<svg style="left:503px;top:1048px;" width="26" height="26" viewBox="0 0 26 26"><defs><linearGradient id="eg" x1="0" y1="1" x2="1" y2="0"><stop offset="0" stop-color="#0c59a4"/><stop offset="0.5" stop-color="#1e90d8"/><stop offset="1" stop-color="#52d36a"/></linearGradient></defs><path d="M13 1.5A11.5 11.5 0 0 1 24.5 13c0 2.5-2 4-5 4h-6c-1.5 0-2.5-1-2.5-2.5 0-3 3-4.5 6-4.5-1-3-4-5-8-5C5 5 1.5 9 1.5 12A11.5 11.5 0 0 1 13 1.5z" fill="url(#eg)"/><path d="M1.5 12c0 6.5 5 12 11.5 12 3 0 5.5-1 7.5-2.5-5 1-10-1.5-11.5-6-1-3 0-6 2-7.5C6 8 1.5 9.5 1.5 12z" fill="#1565b8"/><circle cx="8" cy="19" r="3.2" fill="#a89f98"/><path d="M3.5 24c0.5-2.5 2.3-3.3 4.5-3.3s4 0.8 4.5 3.3z" fill="#8f8780"/></svg>
<svg style="left:551px;top:1049px;" width="24" height="22" viewBox="0 0 24 22"><path d="M1 2h8l2 3h12v15H1z" fill="#f4c430"/><path d="M1 7h22v13H1z" fill="#ffd867"/><path d="M7 12h10v8h-3v-5h-4v5H7z" fill="#3c8fd8"/></svg>
<svg style="left:600px;top:1048px;" width="24" height="24" viewBox="0 0 24 24"><path d="M8 5V3h8v2" fill="none" stroke="#1a4f8c" stroke-width="1.5"/><rect x="2" y="5" width="20" height="17" rx="1.5" fill="#1f4f8f"/><rect x="8" y="10" width="3.6" height="3.6" fill="#f25022"/><rect x="12.4" y="10" width="3.6" height="3.6" fill="#7fba00"/><rect x="8" y="14.4" width="3.6" height="3.6" fill="#00a4ef"/><rect x="12.4" y="14.4" width="3.6" height="3.6" fill="#ffb900"/></svg>
<svg style="left:649px;top:1049px;" width="25" height="22" viewBox="0 0 25 22"><path d="M1 9L12.5 1 24 9v12H1z" fill="#2b8ad8"/><path d="M3 7h19v7l-9.5 5L3 14z" fill="#e6f2fb"/><path d="M1 9l11.5 8L24 9v12H1z" fill="#3aa0e8"/></svg>
<svg style="left:698px;top:1048px;" width="24" height="24" viewBox="0 0 24 24"><circle cx="12" cy="12" r="10.8" fill="#fff" stroke="#111" stroke-width="1.8"/></svg>
<div class="a" style="left:210.0px;width:1000px;text-align:center;top:1057.57px;font-size:7px;line-height:8px;color:#111;font-family:'Liberation Sans',sans-serif;font-weight:bold;letter-spacing:-0.3px">DELL</div>
<svg style="left:747px;top:1048px;" width="26" height="26" viewBox="0 0 26 26"><circle cx="12" cy="12" r="11" fill="#db4437"/><path d="M12 12L22.5 8.5A11 11 0 0 1 6.5 21.5z" fill="#0f9d58"/><path d="M12 12L6.5 21.5A11 11 0 0 1 1.5 8.5z" fill="#0f9d58" opacity="0"/><path d="M12 12L1.8 8A11 11 0 0 0 6.5 21.5z" fill="#0f9d58"/><path d="M12 12L22.5 8.5A11 11 0 0 0 12 1z" fill="#db4437"/><path d="M12 12L22.5 8.5A11 11 0 0 1 12 23z" fill="#f4b400"/><circle cx="12" cy="12" r="5" fill="#fff"/><circle cx="12" cy="12" r="4" fill="#4285f4"/><circle cx="18" cy="18" r="6.5" fill="#1d6e2c"/></svg>
<div class="a" style="left:265.0px;width:1000px;text-align:center;top:1062.23px;font-size:8px;line-height:10px;color:#ffeb80;font-family:'Liberation Sans',sans-serif;font-weight:bold">C</div>
<svg style="left:795px;top:1048px;" width="27" height="24" viewBox="0 0 27 24"><rect x="10" y="2" width="15" height="18" rx="1" fill="#1a73c9"/><path d="M10 10h15v9H10z" fill="#2d9be8"/><path d="M11 11l7 5 7-5" fill="none" stroke="#cde6f8" stroke-width="1.2"/><rect x="1" y="6" width="13" height="13" rx="1" fill="#0f5fb0"/><circle cx="7.5" cy="12.5" r="3.6" fill="none" stroke="#fff" stroke-width="1.8"/></svg>
<svg style="left:845px;top:1048px;" width="26" height="26" viewBox="0 0 26 26"><path d="M3 6c5-5 14-5 19 0M4 7c3 6 10 8 16 2" fill="none" stroke="#d66" stroke-width="1.2"/><circle cx="9" cy="20" r="3" fill="none" stroke="#3a9ad9" stroke-width="1.6"/><circle cx="17" cy="20" r="3" fill="none" stroke="#3a9ad9" stroke-width="1.6"/><path d="M10 17l5-9M16 17l-4-9" stroke="#3a9ad9" stroke-width="1.4"/></svg>
<svg style="left:893px;top:1049px;" width="26" height="22" viewBox="0 0 26 22"><rect x="8" y="1" width="17" height="20" rx="1.2" fill="#2b7cd3"/><path d="M8 6h17M8 11h17M8 16h17" stroke="#41a5ee" stroke-width="2"/><rect x="1" y="5" width="12" height="12" rx="1" fill="#185abd"/></svg>
<div class="a" style="left:407.0px;width:1000px;text-align:center;top:1057.38px;font-size:9px;line-height:11px;color:#fff;font-family:'Liberation Sans',sans-serif;font-weight:bold">W</div>
<svg style="left:943px;top:1048px;" width="25" height="25" viewBox="0 0 25 25"><circle cx="12.5" cy="13" r="11" fill="#ff7139"/><circle cx="12.5" cy="13" r="11" fill="none" stroke="#ffbd4f" stroke-width="2"/><circle cx="13" cy="13" r="5.5" fill="#9059ff"/><path d="M3 8c2-6 10-8 14-4c-4-1-8 1-9 5z" fill="#ffbd4f"/></svg>
<svg style="left:991px;top:1048px;" width="26" height="24" viewBox="0 0 26 24"><circle cx="15" cy="12" r="10" fill="#ed6c47"/><path d="M15 2a10 10 0 0 1 10 10H15z" fill="#ff8f6b"/><rect x="1" y="6" width="12" height="12" rx="1" fill="#c43e1c"/></svg>
<div class="a" style="left:505.0px;width:1000px;text-align:center;top:1057.38px;font-size:9px;line-height:11px;color:#fff;font-family:'Liberation Sans',sans-serif;font-weight:bold">P</div>
<svg style="left:1040px;top:1049px;" width="26" height="22" viewBox="0 0 26 22"><rect x="8" y="1" width="17" height="20" rx="1.2" fill="#21a366"/><path d="M8 7h17M8 14h17M16 1v20" stroke="#107c41" stroke-width="1.2"/><rect x="1" y="5" width="12" height="12" rx="1" fill="#107c41"/></svg>
<div class="a" style="left:554.0px;width:1000px;text-align:center;top:1057.38px;font-size:9px;line-height:11px;color:#fff;font-family:'Liberation Sans',sans-serif;font-weight:bold">X</div>
<svg style="left:1090px;top:1046px;" width="28" height="28" viewBox="0 0 28 28"><circle cx="20" cy="6" r="3" fill="#7b83eb"/><rect x="14" y="10" width="11" height="11" rx="4" fill="#7b83eb"/><circle cx="13" cy="5" r="3.5" fill="#5059c9"/><rect x="6" y="9" width="15" height="14" rx="2" fill="#5059c9"/><rect x="1" y="9" width="12" height="12" rx="1" fill="#4b53bc"/><circle cx="20" cy="21" r="6" fill="#d92c2c"/></svg>
<div class="a" style="left:597.0px;width:1000px;text-align:center;top:1058.38px;font-size:9px;line-height:11px;color:#fff;font-family:'Liberation Sans',sans-serif;font-weight:bold">T</div>
<div class="a" style="left:610.0px;width:1000px;text-align:center;top:1065.38px;font-size:9px;line-height:11px;color:#fff;font-family:'Liberation Sans',sans-serif;">1</div>
<svg style="left:1139px;top:1047px;" width="28" height="28" viewBox="0 0 28 28"><rect x="2" y="3" width="22" height="20" rx="6" fill="#2d8cff"/><path d="M7 9h8v7H7zM15 11l4-2v7l-4-2" fill="#fff"/><rect x="12" y="12" width="12" height="13" rx="2" fill="#e04040"/></svg>
<div class="a" style="left:658.0px;width:1000px;text-align:center;top:1065.38px;font-size:9px;line-height:11px;color:#fff;font-family:'Liberation Sans',sans-serif;">1</div>
<svg style="left:1189px;top:1048px;" width="24" height="24" viewBox="0 0 24 24"><circle cx="12" cy="12" r="10.5" fill="none" stroke="#7fb4d4" stroke-width="1.6"/><circle cx="12" cy="12" r="3.5" fill="#4fa3d6"/></svg>
<svg style="left:1412px;top:1048px;" width="24" height="20" viewBox="0 0 24 20"><circle cx="8" cy="8" r="5" fill="#f7d04a"/><path d="M6 17c-3 0-5-2-4-5c1-2 3-3 5-2c1-3 6-4 8-1c3-1 7 1 7 4s-2 4-4 4z" fill="#d9e9f7" stroke="#b6cde3" stroke-width="0.8"/></svg>
<div class="a" style="left:1446.0px;top:1052.30px;font-size:15px;line-height:18px;color:#222;font-family:'Liberation Sans',sans-serif;;transform:scaleX(0.8710);transform-origin:0 0">68°F</div>
<div class="a" style="left:1482.6px;top:1052.30px;font-size:15px;line-height:18px;color:#222;font-family:'Liberation Sans',sans-serif;;transform:scaleX(0.9378);transform-origin:0 0">Mostly cloudy</div>
<svg style="left:1557px;top:1054px;" width="12" height="8" viewBox="0 0 12 8"><path d="M1 7l5-5 5 5" fill="none" stroke="#222" stroke-width="1.2"/></svg>
<svg style="left:1583px;top:1052px;" width="24" height="16" viewBox="0 0 24 16"><path d="M5 14c-3 0-4-2-4-4s2-4 4-3c1-4 6-6 10-3c3-1 7 1 7 5s-2 5-4 5z" fill="#333" stroke="#222" stroke-width="0.8"/><path d="M6 12c-2 0-3-1-3-2.5S4 7 6 8c1-3 5-4 8-2c2-1 5 0 5 3s-1 3-3 3z" fill="#dde5ee"/></svg>
<svg style="left:1618px;top:1050px;" width="18" height="20" viewBox="0 0 18 20"><rect x="3" y="5" width="9" height="10" rx="2" fill="none" stroke="#222" stroke-width="1.3"/><path d="M12 8l4-2v8l-4-2M1 3c0-1 1-2 2-2M15 1c1 0 2 1 2 2M1 17c0 1 1 2 2 2M15 19c1 0 2-1 2-2" fill="none" stroke="#222" stroke-width="1.2"/></svg>
<svg style="left:1652px;top:1049px;" width="14" height="22" viewBox="0 0 14 22"><rect x="4" y="1" width="6" height="13" rx="3" fill="#111"/><path d="M1 10c0 4 3 6 6 6s6-2 6-6M7 16v5" fill="none" stroke="#222" stroke-width="1.3"/></svg>
<svg style="left:1680px;top:1050px;" width="22" height="20" viewBox="0 0 22 20"><path d="M1 3l19-2v14H1z" fill="none" stroke="#222" stroke-width="1.3"/><path d="M6 12c1-4 4-5 8-5M12 5l2 2-2 2" fill="none" stroke="#222" stroke-width="1.2"/><circle cx="17" cy="15" r="3.5" fill="#2a6fc9"/></svg>
<svg style="left:1712px;top:1052px;" width="20" height="14" viewBox="0 0 20 14"><rect x="6" y="3" width="12" height="8" fill="#222"/><path d="M1 5h5M1 9h5M3 3v8" stroke="#222" stroke-width="1.4"/></svg>
<svg style="left:1745px;top:1049px;" width="20" height="20" viewBox="0 0 20 20"><rect x="1" y="2" width="18" height="12" fill="none" stroke="#222" stroke-width="1.3"/><path d="M10 14v4M5 18h10M4 2V1h5v5H1" fill="none" stroke="#222" stroke-width="1.2"/></svg>
<svg style="left:1777px;top:1050px;" width="20" height="20" viewBox="0 0 20 20"><path d="M1 7h4l5-5v16l-5-5H1z" fill="none" stroke="#222" stroke-width="1.3"/><path d="M13 6c2 2 2 6 0 8M16 3c4 4 4 10 0 14" fill="none" stroke="#222" stroke-width="1.3"/></svg>
<div class="a" style="left:1814.6px;top:1042.50px;font-size:13px;line-height:16px;color:#222;font-family:'Liberation Sans',sans-serif;;transform:scaleX(0.9000);transform-origin:0 0">6:59 PM</div>
<div class="a" style="left:1809.0px;top:1060.50px;font-size:13px;line-height:16px;color:#222;font-family:'Liberation Sans',sans-serif;;transform:scaleX(0.9070);transform-origin:0 0">4/21/2022</div>
<svg style="left:1876px;top:1048px;" width="24" height="28" viewBox="0 0 24 28"><path d="M1 1h19v14H9l-4 4v-4H1z" fill="#111"/><path d="M4 5h13M4 8h13M4 11h9" stroke="#eee" stroke-width="1"/><circle cx="16" cy="19" r="7" fill="#dfe7ef" stroke="#333" stroke-width="1.2"/></svg>
<div class="a" style="left:1392.0px;width:1000px;text-align:center;top:1063.69px;font-size:11px;line-height:13px;color:#111;font-family:'Liberation Sans',sans-serif;">21</div>
<div style="position:absolute;left:1915px;top:1040px;width:1px;height:40px;background:#b8c2cc;"></div>
</body></html>
